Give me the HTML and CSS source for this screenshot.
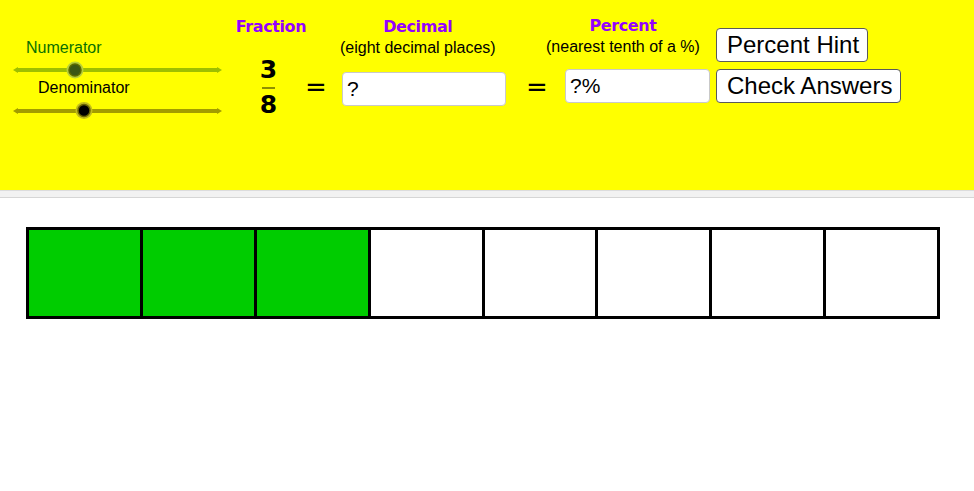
FILE: index.html
```html
<!DOCTYPE html>
<html>
<head>
<meta charset="utf-8">
<link rel="stylesheet" href="styles.css">
</head>
<body>
<div class="panel">
  <div class="sliders">
    <div class="slabel num-label">Numerator</div>
    <svg class="slider s1" width="236" height="22" viewBox="0 0 236 22">
      <line x1="16" y1="13" x2="219" y2="13" stroke="#9ebf00" stroke-width="4"/>
      <polygon points="13,13 18,10 18,16" fill="#9ebf00"/>
      <polygon points="222,13 217,10 217,16" fill="#9ebf00"/>
      <circle cx="75" cy="13" r="8.5" fill="#b9cf3a"/>
      <circle cx="75" cy="13" r="6" fill="#3b5714" stroke="#5b6a00" stroke-width="1.5"/>
    </svg>
    <div class="slabel den-label">Denominator</div>
    <svg class="slider s2" width="236" height="28" viewBox="0 0 236 28">
      <line x1="16" y1="14" x2="219" y2="14" stroke="#a29c00" stroke-width="4"/>
      <polygon points="13,14 18,11 18,17" fill="#a29c00"/>
      <polygon points="222,14 217,11 217,17" fill="#a29c00"/>
      <circle cx="84" cy="13.5" r="8.5" fill="#c2bd1c"/>
      <circle cx="84" cy="13.5" r="6" fill="#000000" stroke="#6a6400" stroke-width="1.5"/>
    </svg>
  </div>

  <div class="fraction">
    <div class="title">Fraction</div>
    <div class="frac">
      <div class="digit">3</div>
      <div class="fbar"></div>
      <div class="digit">8</div>
    </div>
  </div>

  <div class="eq eq1">=</div>

  <div class="col decimal">
    <div class="heads">
      <div class="title">Decimal</div>
      <div class="sub">(eight decimal places)</div>
    </div>
    <div class="input dec-input">?</div>
  </div>

  <div class="eq eq2">=</div>

  <div class="col percent">
    <div class="heads">
      <div class="title">Percent</div>
      <div class="sub">(nearest tenth of a %)</div>
    </div>
    <div class="input pct-input">?%</div>
  </div>

  <div class="buttons">
    <div class="btn">Percent Hint</div>
    <div class="btn">Check Answers</div>
  </div>
</div>
<div class="divider"></div>
<div class="canvas">
  <div class="bar">
    <div class="cell on"></div>
    <div class="cell on"></div>
    <div class="cell on"></div>
    <div class="cell"></div>
    <div class="cell"></div>
    <div class="cell"></div>
    <div class="cell"></div>
    <div class="cell"></div>
  </div>
</div>
</body>
</html>
```
FILE: styles.css
```css
html, body {
  margin: 0;
  padding: 0;
  background: #ffffff;
}
body {
  width: 974px;
  height: 491px;
  overflow: hidden;
  font-family: "Liberation Sans", Arial, sans-serif;
  color: #000;
}
.panel {
  height: 190px;
  background: #ffff00;
  display: flex;
  align-items: flex-start;
}
.sliders {
  width: 236px;
  flex: none;
  padding-top: 39px;
  display: flex;
  flex-direction: column;
}
.slabel {
  font-size: 16px;
  line-height: 18px;
  height: 18px;
}
.num-label {
  padding-left: 26px;
  color: #0a7000;
}
.den-label {
  padding-left: 38px;
}
.slider {
  display: block;
}
.title {
  font-family: "DejaVu Sans", sans-serif;
  font-weight: bold;
  font-size: 16px;
  letter-spacing: -0.4px;
  line-height: 18px;
  color: #9400ff;
  white-space: nowrap;
}
.fraction {
  width: 70px;
  flex: none;
  padding-top: 18px;
  display: flex;
  flex-direction: column;
  align-items: center;
}
.frac {
  margin-top: 21px;
  display: flex;
  flex-direction: column;
  align-items: center;
  padding-right: 5px;
}
.digit {
  font-family: "DejaVu Sans", sans-serif;
  font-weight: bold;
  font-size: 25px;
  line-height: 26px;
}
.fbar {
  width: 13px;
  height: 2px;
  background: #8f8f00;
  margin: 4px 0 3px;
}
.eq {
  flex: none;
  font-family: "DejaVu Sans", sans-serif;
  font-size: 26px;
  line-height: 26px;
  text-align: center;
  padding-top: 74px;
}
.eq1 {
  width: 17px;
  margin-left: -1px;
}
.eq2 {
  width: 19px;
  margin-left: 20px;
}
.col {
  flex: none;
  padding-top: 18px;
  display: flex;
  flex-direction: column;
}
.decimal {
  width: 166px;
  margin-left: 18px;
}
.percent {
  width: 164px;
  margin-left: 1px;
}
.heads {
  display: flex;
  flex-direction: column;
  align-items: center;
  align-self: flex-start;
}
.sub {
  font-size: 16px;
  line-height: 18px;
  margin-top: 3px;
  white-space: nowrap;
}
.input {
  box-sizing: border-box;
  height: 34px;
  background: #fff;
  border: 1px solid #c9c9c9;
  border-radius: 4px;
  font-size: 21px;
  line-height: 32px;
  padding-left: 4px;
}
.dec-input {
  margin-top: 15px;
  margin-left: 2px;
  width: 164px;
}
.pct-input {
  margin-top: 13px;
  margin-left: 19px;
  width: 145px;
}
.percent .heads {
  margin-top: -1px;
}
.buttons {
  flex: none;
  margin-left: 6px;
  padding-top: 28px;
  display: flex;
  flex-direction: column;
  align-items: flex-start;
  gap: 7px;
}
.btn {
  box-sizing: border-box;
  height: 34px;
  background: #fff;
  border: 1.5px solid #5a5a5a;
  border-radius: 4px;
  font-size: 24px;
  line-height: 31px;
  padding: 0 8px 0 10px;
  white-space: nowrap;
}
.divider {
  height: 6px;
  background: #f2f2f2;
  border-top: 1px solid #dcdcdc;
  border-bottom: 1px solid #d6d6d6;
}
.canvas {
  padding-top: 29px;
  padding-left: 26px;
}
.bar {
  box-sizing: border-box;
  width: 914px;
  height: 92px;
  border: 3px solid #000;
  display: flex;
}
.cell {
  flex: 1;
  background: #fff;
  border-left: 3px solid #000;
}
.cell:first-child {
  border-left: none;
}
.cell.on {
  background: #00cc00;
}
```
